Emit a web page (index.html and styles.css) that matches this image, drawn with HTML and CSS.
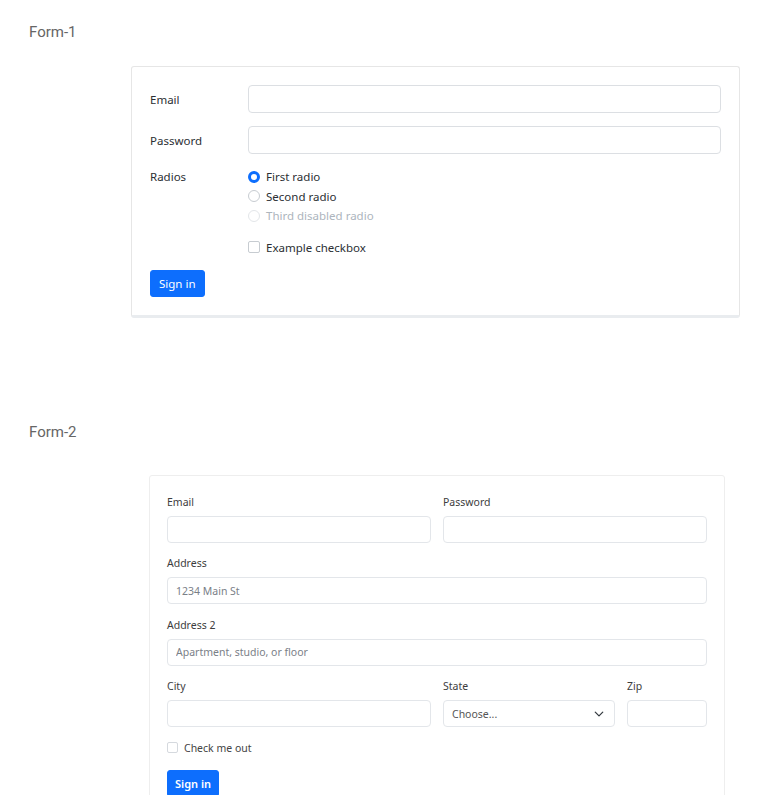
FILE: index.html
```html
<!DOCTYPE html>
<html>
<head>
<meta charset="utf-8">
<link rel="stylesheet" href="styles.css">
</head>
<body>
<section class="demo demo-1">
  <h2 class="demo-title">Form-1</h2>
  <form class="card card-1">
    <div class="h-row">
      <label class="h-label">Email</label>
      <input class="field" type="email">
    </div>
    <div class="h-row">
      <label class="h-label">Password</label>
      <input class="field" type="password">
    </div>
    <div class="h-row radios-row">
      <span class="h-label">Radios</span>
      <div class="checks">
        <label class="check"><span class="radio on"></span>First radio</label>
        <label class="check"><span class="radio"></span>Second radio</label>
        <label class="check disabled"><span class="radio"></span>Third disabled radio</label>
      </div>
    </div>
    <div class="h-row check-row">
      <span class="h-label"></span>
      <label class="check"><span class="box"></span>Example checkbox</label>
    </div>
    <div class="btn-row">
      <button type="button" class="btn">Sign in</button>
    </div>
  </form>
</section>

<section class="demo demo-2">
  <h2 class="demo-title">Form-2</h2>
  <form class="card card-2">
    <div class="grid">
      <div class="cell span-6">
        <label class="v-label">Email</label>
        <input class="field small" type="email">
      </div>
      <div class="cell span-6">
        <label class="v-label">Password</label>
        <input class="field small" type="password">
      </div>
      <div class="cell span-12">
        <label class="v-label">Address</label>
        <input class="field small" type="text" placeholder="1234 Main St">
      </div>
      <div class="cell span-12">
        <label class="v-label">Address 2</label>
        <input class="field small" type="text" placeholder="Apartment, studio, or floor">
      </div>
      <div class="cell span-6">
        <label class="v-label">City</label>
        <input class="field small" type="text">
      </div>
      <div class="cell span-4">
        <label class="v-label">State</label>
        <div class="select">
          <span>Choose...</span>
          <svg width="10" height="10" viewBox="0 0 16 16"><path d="M2 5l6 6 6-6" fill="none" stroke="#343a40" stroke-width="2" stroke-linecap="round" stroke-linejoin="round"/></svg>
        </div>
      </div>
      <div class="cell span-2">
        <label class="v-label">Zip</label>
        <input class="field small" type="text">
      </div>
      <div class="cell span-12">
        <label class="check small-check"><span class="box"></span>Check me out</label>
      </div>
      <div class="cell span-12">
        <button type="button" class="btn btn-2">Sign in</button>
      </div>
    </div>
  </form>
</section>
</body>
</html>
```
FILE: styles.css
```css
* { box-sizing: border-box; }
html, body { margin: 0; padding: 0; background: #fff; }
body {
  font-family: "Noto Sans", "Open Sans", sans-serif;
  color: #212529;
  overflow: hidden;
}
.demo { padding-left: 29px; }
.demo-1 { padding-top: 22px; }
.demo-2 { padding-top: 104px; }
.demo-title {
  margin: 0;
  font-family: Roboto, sans-serif;
  font-weight: 400;
  font-size: 15px;
  line-height: 20px;
  color: #666;
}
.card {
  background: #fff;
  border: 1px solid #e6e6e6;
  border-radius: 3px;
}
.card-1 {
  margin: 24px 0 0 102px;
  width: 609px;
  padding: 18px 18px 18px 18px;
  border-bottom: 3px solid #e9ecef;
}
.h-row {
  display: flex;
  align-items: center;
  margin-bottom: 13px;
}
.h-label {
  width: 98px;
  flex: none;
  font-size: 11.5px;
  color: #2b2f33;
}
.field {
  flex: 1;
  display: block;
  height: 28px;
  border: 1px solid #dcdfe3;
  border-radius: 4px;
  background: #fff;
  font-family: inherit;
  font-size: 11.5px;
  padding: 0 8px;
  outline: none;
}
.radios-row { align-items: flex-start; margin-top: 12px; margin-bottom: 12px; }
.radios-row .h-label { line-height: 19.5px; }
.checks { display: flex; flex-direction: column; }
.check {
  display: flex;
  align-items: center;
  font-size: 11.5px;
  line-height: 19.5px;
  color: #2b2f33;
}
.check.disabled { color: #adb5bd; }
.radio {
  width: 12px; height: 12px;
  border-radius: 50%;
  border: 1px solid #c7ccd1;
  margin-right: 6px;
  flex: none;
  background: #fff;
}
.check.disabled .radio { border-color: #e3e6e9; }
.radio.on {
  background: #fff;
  border: 3.5px solid #0d6efd;
}
.box {
  width: 12px; height: 12px;
  border-radius: 2px;
  border: 1px solid #c7ccd1;
  margin-right: 6px;
  flex: none;
  background: #fff;
}
.check-row { margin-bottom: 13px; }
.btn-row { display: flex; }
.btn {
  background: #0d6efd;
  color: #fff;
  border: 1px solid #0d6efd;
  border-radius: 3px;
  font-family: inherit;
  font-size: 11.5px;
  height: 27px;
  padding: 0 8px;
  cursor: pointer;
}
.card-2 {
  margin: 33px 0 0 120px;
  width: 576px;
  padding: 17px 17px 40px 17px;
  border-color: #eeeeee;
}
.grid {
  display: grid;
  grid-template-columns: repeat(12, 1fr);
  column-gap: 12px;
  row-gap: 11.4px;
}
.span-12 { grid-column: span 12; }
.span-6 { grid-column: span 6; }
.span-4 { grid-column: span 4; }
.span-2 { grid-column: span 2; }
.v-label {
  display: block;
  font-size: 10.5px;
  line-height: 18px;
  margin-bottom: 5px;
  color: #3d3d3d;
}
.field.small {
  width: 100%;
  height: 27px;
  border-color: #e3e6ea;
  font-size: 10.5px;
  color: #495057;
}
.field.small::placeholder { color: #7a8087; }
.select {
  height: 27px;
  border: 1px solid #e3e6ea;
  border-radius: 4px;
  display: flex;
  align-items: center;
  justify-content: space-between;
  padding: 0 10px 0 8px;
  font-size: 10.5px;
  color: #555;
}
.small-check { font-size: 10.5px; line-height: 18px; color: #444; }
.small-check .box { width: 11px; height: 11px; border-color: #d5d9de; margin-right: 6px; }
.btn-2 { margin-top: 2px; height: 27px; font-size: 11px; font-weight: 600; padding: 0 7px; }
```
